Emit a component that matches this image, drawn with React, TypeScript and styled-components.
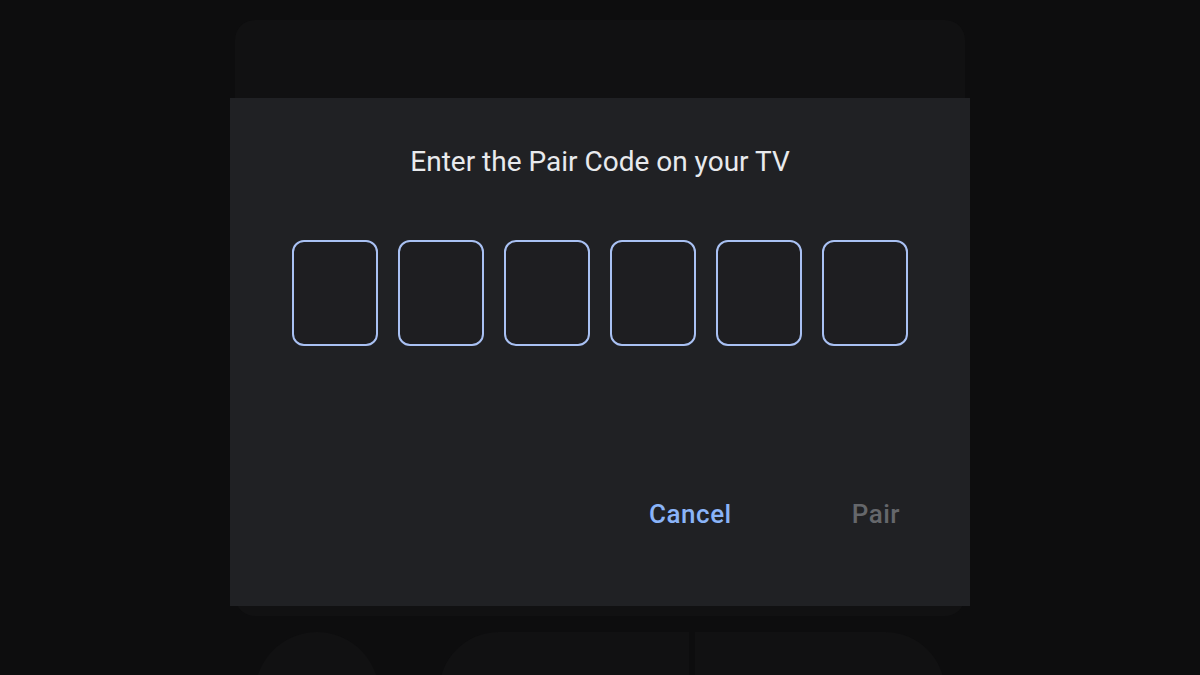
import styled, { createGlobalStyle } from 'styled-components';

const Global = createGlobalStyle`
  html, body {
    margin: 0;
    padding: 0;
    background: #0d0d0e;
  }
  body {
    font-family: Roboto, "Noto Sans", Arial, sans-serif;
    -webkit-font-smoothing: antialiased;
  }
`;

// the whole screen, dimmed behind the dialog
const Screen = styled.div`
  position: relative;
  width: 1200px;
  height: 675px;
  overflow: hidden;
  background: #0d0d0e;
  display: flex;
  flex-direction: column;
  align-items: center;
`;

// the remote card behind the dialog
const BackCard = styled.div`
  margin-top: 20px;
  width: 730px;
  height: 596px;
  border-radius: 20px;
  background: #111112;
  flex-shrink: 0;
`;

// row of remote buttons peeking at the bottom
const ButtonRow = styled.div`
  margin-top: 16px;
  display: flex;
  gap: 6px;
  align-items: flex-start;
`;

const RoundKey = styled.div`
  width: 124px;
  height: 124px;
  border-radius: 50%;
  background: #111112;
  margin-right: 54px;
`;

const WideKey = styled.div<{ $side: 'left' | 'right' }>`
  width: 250px;
  height: 90px;
  background: #111112;
  border-radius: ${(p) => (p.$side === 'left' ? '60px 0 0 0' : '0 60px 0 0')};
`;

// the pairing dialog sitting over the remote
const Dialog = styled.div`
  position: absolute;
  top: 98px;
  left: 230px;
  width: 740px;
  height: 508px;
  box-sizing: border-box;
  background: #202124;
  padding-top: 44px;
  display: flex;
  flex-direction: column;
  align-items: center;
`;

const Title = styled.h2`
  margin: 0;
  font-family: Roboto, "Noto Sans", Arial, sans-serif;
  font-weight: 400;
  font-size: 28px;
  line-height: 40px;
  color: #e8eaed;
  letter-spacing: 0;
`;

const CodeRow = styled.div`
  margin-top: 58px;
  display: flex;
  gap: 20px;
`;

const CodeBox = styled.div`
  width: 86px;
  height: 106px;
  box-sizing: border-box;
  border: 2px solid #a9c1f3;
  border-radius: 12px;
  background: #1e1e21;
`;

const Actions = styled.div`
  margin-top: auto;
  margin-bottom: 76px;
  align-self: stretch;
  display: flex;
  justify-content: flex-end;
  padding-right: 70px;
  gap: 120px;
`;

const ActionButton = styled.button<{ $enabled?: boolean }>`
  background: none;
  border: none;
  padding: 0;
  font-family: Roboto, "Noto Sans", Arial, sans-serif;
  font-weight: 500;
  font-size: 26px;
  letter-spacing: 0.5px;
  line-height: 32px;
  color: ${(p) => (p.$enabled ? '#8ab4f8' : '#65676b')};
  cursor: ${(p) => (p.$enabled ? 'pointer' : 'default')};
`;

export default function App() {
  return (
    <>
      <Global />
      <Screen>
        <BackCard />
        <ButtonRow>
          <RoundKey />
          <WideKey $side="left" />
          <WideKey $side="right" />
        </ButtonRow>
        <Dialog>
          <Title>Enter the Pair Code on your TV</Title>
          <CodeRow>
            {[0, 1, 2, 3, 4, 5].map((i) => (
              <CodeBox key={i} />
            ))}
          </CodeRow>
          <Actions>
            <ActionButton $enabled>Cancel</ActionButton>
            <ActionButton disabled>Pair</ActionButton>
          </Actions>
        </Dialog>
      </Screen>
    </>
  );
}
